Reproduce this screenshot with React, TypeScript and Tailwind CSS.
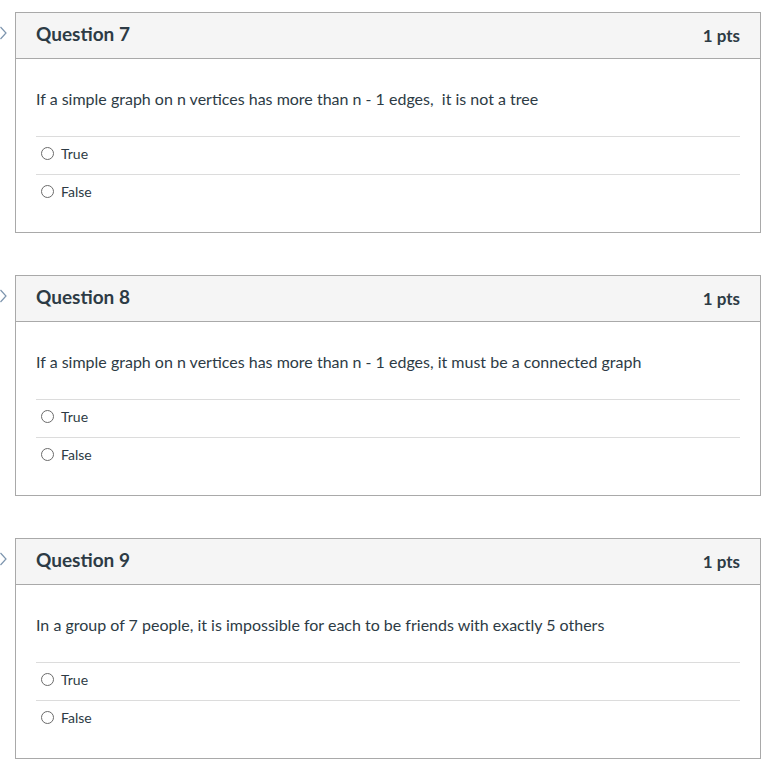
const questions = [
  {
    number: 7,
    text: "If a simple graph on n vertices has more than n - 1 edges,\u00a0 it is not a tree",
  },
  {
    number: 8,
    text: "If a simple graph on n vertices has more than n - 1 edges, it must be a connected graph",
  },
  {
    number: 9,
    text: "In a group of 7 people, it is impossible for each to be friends with exactly 5 others",
  },
]

function Chevron() {
  return (
    <svg width="15" height="46" viewBox="0 0 15 46" className="shrink-0">
      <polyline points="0.5,15 6,21 0.5,27" fill="none" stroke="#7d95ae" strokeWidth="1.2" />
    </svg>
  )
}

function Answer({ label }: { label: string }) {
  return (
    <div className="flex items-center h-[38px] pb-[4px] border-t border-[#dcdcdc]">
      <span className="ml-[5px] w-[13px] h-[13px] rounded-full border border-[#6b6b6b] bg-white shrink-0" />
      <span className="ml-[7px] text-[14px] text-[#2d3b45]">{label}</span>
    </div>
  )
}

function QuestionCard({ number, text }: { number: number; text: string }) {
  return (
    <div className="flex">
      <Chevron />
      <div className="w-[746px] border border-[#a9a9a9] bg-white">
        <div className="h-[46px] bg-[#f5f5f5] border-b border-[#a9a9a9] px-5 pb-[4px] flex items-center justify-between">
          <h2 className="text-[19px] font-bold text-[#2d3b45] leading-none">Question {number}</h2>
          <span className="text-[17px] font-bold text-[#2d3b45] leading-none pt-[3px]">1 pts</span>
        </div>
        <div className="px-5 pt-[28px] pb-[20px]">
          <p className="text-[16px] leading-6 text-[#2d3b45] mb-[25px]">{text}</p>
          <Answer label="True" />
          <Answer label="False" />
        </div>
      </div>
    </div>
  )
}

export default function App() {
  return (
    <div
      className="w-[781px] h-[777px] bg-white pt-[12px] flex flex-col gap-[42px] overflow-hidden"
      style={{ fontFamily: "Lato, 'Liberation Sans', sans-serif" }}
    >
      {questions.map((q) => (
        <QuestionCard key={q.number} number={q.number} text={q.text} />
      ))}
    </div>
  )
}
